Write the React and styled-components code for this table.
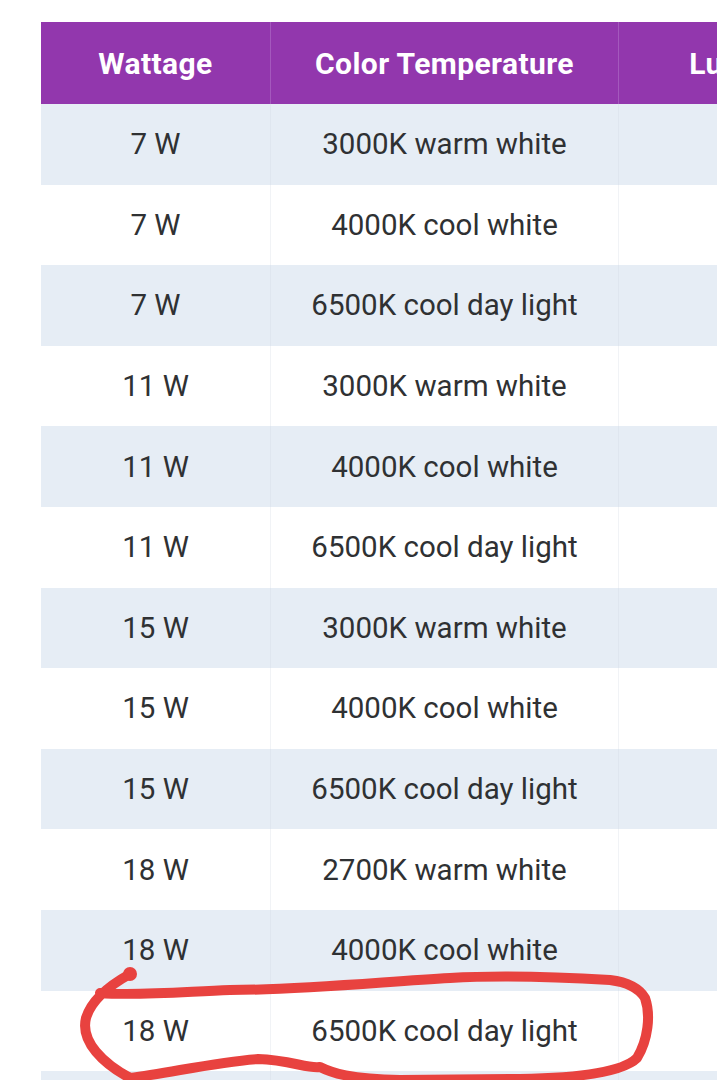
import React from "react";
import styled, { createGlobalStyle } from "styled-components";

const Global = createGlobalStyle`
  html, body { margin: 0; padding: 0; background: #ffffff; }
  body { font-family: Roboto, "Liberation Sans", Arial, sans-serif; }
`;

const Page = styled.div`
  position: relative;
  width: 717px;
  height: 1080px;
  overflow: hidden;
  background: #ffffff;
  padding: 22px 0 0 41px;
  box-sizing: border-box;
`;

const Table = styled.table`
  border-collapse: collapse;
  table-layout: fixed;
  width: 826px;
  font-family: Roboto, "Liberation Sans", Arial, sans-serif;
`;

const HeadRow = styled.tr`
  height: 82px;
  background: #9237ad;
`;

const Th = styled.th`
  width: ${(p) => p.$w}px;
  padding: 0;
  color: #ffffff;
  font-weight: 700;
  font-size: 30px;
  letter-spacing: 0.4px;
  text-align: center;
  vertical-align: middle;
  border-left: 1px solid #a458bd;
  &:first-child { border-left: none; }
`;

const Row = styled.tr`
  height: 80.6px;
  background: ${(p) => (p.$striped ? "#e6edf5" : "#ffffff")};
`;

const Td = styled.td`
  padding: 0;
  color: #2f3133;
  font-size: 29.5px;
  font-weight: 400;
  text-align: center;
  vertical-align: middle;
  border-left: 1px solid ${(p) => (p.$striped ? "#dfe6ef" : "#f1f3f6")};
  &:first-child { border-left: none; }
`;

const Annotation = styled.svg`
  position: absolute;
  left: 0;
  top: 0;
  width: 717px;
  height: 1080px;
  pointer-events: none;
`;

const rows = [
  ["7 W", "3000K warm white"],
  ["7 W", "4000K cool white"],
  ["7 W", "6500K cool day light"],
  ["11 W", "3000K warm white"],
  ["11 W", "4000K cool white"],
  ["11 W", "6500K cool day light"],
  ["15 W", "3000K warm white"],
  ["15 W", "4000K cool white"],
  ["15 W", "6500K cool day light"],
  ["18 W", "2700K warm white"],
  ["18 W", "4000K cool white"],
  ["18 W", "6500K cool day light"],
  ["20 W", "3000K warm white"],
];

export default function App() {
  return (
    <>
      <Global />
      <Page>
        <Table>
          <thead>
            <HeadRow>
              <Th $w={229}>Wattage</Th>
              <Th $w={347}>Color Temperature</Th>
              <Th $w={250}>Lumens</Th>
            </HeadRow>
          </thead>
          <tbody>
            {rows.map(([w, c], i) => {
              const striped = i % 2 === 0;
              return (
                <Row key={i} $striped={striped}>
                  <Td $striped={striped}>{w}</Td>
                  <Td $striped={striped}>{c}</Td>
                  <Td $striped={striped}></Td>
                </Row>
              );
            })}
          </tbody>
        </Table>
        <Annotation viewBox="0 0 717 1080">
          <path
            d="M130 974 C 112 984, 92 998, 86 1018 C 80 1042, 104 1064, 130 1078 C 170 1073, 215 1062, 258 1059 C 290 1060, 308 1069, 320 1067 C 332 1073, 350 1079, 400 1080 L 520 1079 C 575 1078, 622 1073, 637 1058 C 648 1040, 651 1015, 645 998 C 639 988, 626 982, 610 980 C 560 977, 500 975, 450 978 C 380 982, 300 990, 230 990 C 180 992, 135 996, 100 993"
            fill="none"
            stroke="#e8423f"
            strokeWidth="10"
            strokeLinecap="round"
            strokeLinejoin="round"
          />
          <circle cx="130" cy="974" r="7" fill="#e8423f" />
        </Annotation>
      </Page>
    </>
  );
}
